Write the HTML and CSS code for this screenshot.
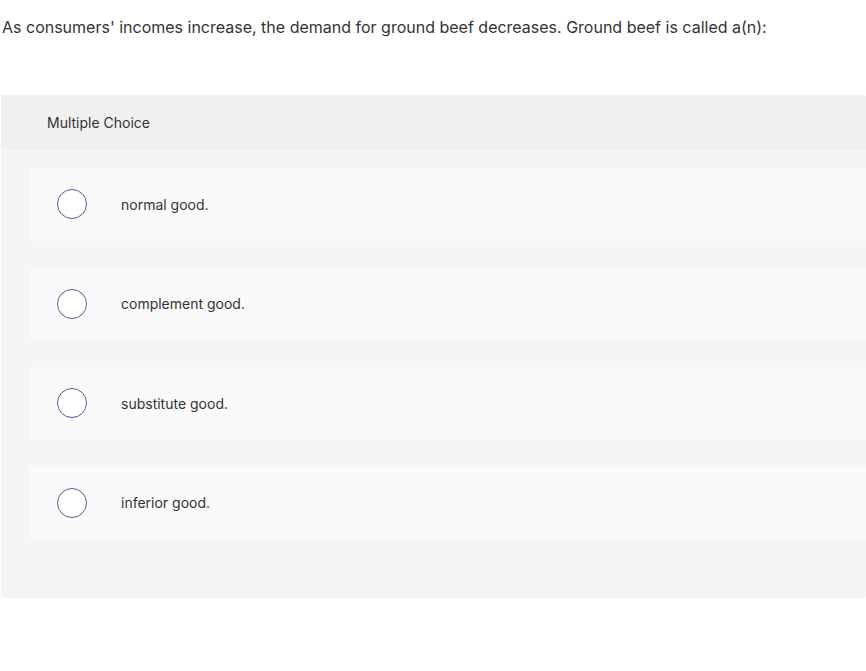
FILE: index.html
```html
<!DOCTYPE html>
<html lang="en">
<head>
<meta charset="utf-8">
<title>Multiple Choice</title>
<link rel="stylesheet" href="styles.css">
</head>
<body>
<div class="page">
  <p class="question">As consumers' incomes increase, the demand for ground beef decreases. Ground beef is called a(n):</p>
  <section class="panel">
    <header class="panel-head">Multiple Choice</header>
    <div class="options">
      <label class="option"><span class="radio"></span><span class="opt-text">normal good.</span></label>
      <label class="option"><span class="radio"></span><span class="opt-text">complement good.</span></label>
      <label class="option"><span class="radio"></span><span class="opt-text">substitute good.</span></label>
      <label class="option"><span class="radio"></span><span class="opt-text">inferior good.</span></label>
    </div>
  </section>
</div>
</body>
</html>
```
FILE: styles.css
```css
html, body {
  margin: 0;
  padding: 0;
  background: #ffffff;
}
body {
  font-family: "Inter", "Liberation Sans", sans-serif;
  color: #333333;
  overflow: hidden;
}
.page {
  padding-top: 16px;
}
.question {
  margin: 0 0 0 2px;
  font-size: 16px;
  line-height: 22px;
  color: #333333;
  white-space: nowrap;
}
.panel {
  margin: 57px 0 0 1px;
  background: #f5f5f5;
  border-radius: 3px;
  padding-bottom: 59px;
}
.panel-head {
  height: 55px;
  background: #f0f0f0;
  border-radius: 3px 3px 0 0;
  display: flex;
  align-items: center;
  padding-left: 46px;
  font-size: 14px;
  color: #333333;
}
.options {
  padding: 18px 0 0 29px;
  display: flex;
  flex-direction: column;
  gap: 27px;
}
.option {
  height: 72.5px;
  background: #fafafa;
  border-radius: 3px 0 0 3px;
  display: flex;
  align-items: center;
  padding-left: 27px;
}
.radio {
  box-sizing: border-box;
  width: 30px;
  height: 30px;
  border: 1.5px solid #4a5e96;
  border-radius: 50%;
  background: #ffffff;
  flex: none;
}
.opt-text {
  margin-left: 34px;
  font-size: 14px;
  color: #333333;
}
```
